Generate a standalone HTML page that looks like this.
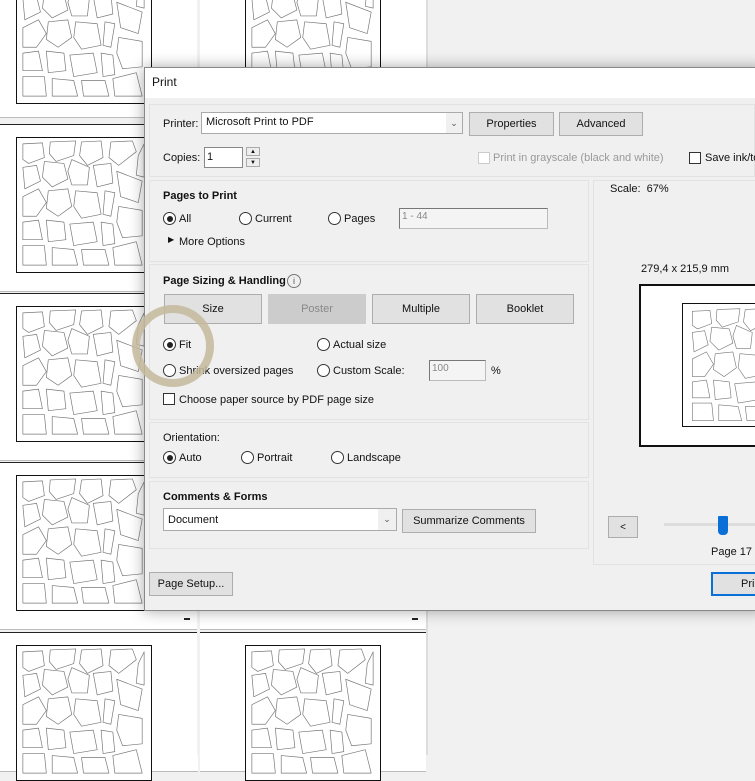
<!DOCTYPE html>
<html><head><meta charset="utf-8">
<style>
*{box-sizing:border-box;margin:0;padding:0}
body{width:755px;height:755px;overflow:hidden;position:relative;background:#f1f1f1;font-family:"Liberation Sans",sans-serif;font-size:11px;color:#111}
.a{position:absolute}
.card{position:absolute;background:#fff;border-top:1px solid #222;border-bottom:1px solid #bbb}
.box{position:absolute;width:136px;height:136px;border:1.5px solid #111;background:#fff}
.box svg{position:absolute;left:0;top:0}
.btn{position:absolute;background:#e1e1e1;border:1px solid #adadad;text-align:center;font-size:11px;line-height:22px}
.rad{position:absolute;width:13px;height:13px;border:1px solid #333;border-radius:50%;background:#fff}
.rad.on::after{content:"";position:absolute;left:2.5px;top:2.5px;width:6px;height:6px;border-radius:50%;background:#222}
.lbl{position:absolute;font-size:11px;white-space:nowrap}
.sec{position:absolute;left:149px;width:440px;border:1px solid #e2e2e2;background:#f0f0f0}
.h{position:absolute;font-weight:bold;font-size:11px}
.inp{position:absolute;background:#f4f4f4;border:1px solid #bbb;border-top-color:#777;border-left-color:#777;color:#888;font-size:10px;padding:2px 2px}
.chk{position:absolute;width:12px;height:12px;border:1px solid #333;background:#fff}
</style></head><body>
<svg width="0" height="0" style="position:absolute">
<defs>
<symbol id="v" viewBox="0 0 136 136">
<g fill="none" stroke="#777" stroke-width="0.7" stroke-linejoin="round">
<polygon points="6,6 26,5 28,20 12,26 6,22"/>
<polygon points="34,4 60,3 58,18 40,24 33,16"/>
<polygon points="66,4 86,3 88,20 72,28 64,18"/>
<polygon points="96,4 118,3 122,14 104,28 94,20"/>
<polygon points="124,18 130,6 130,40 122,38"/>
<polygon points="6,30 20,28 24,44 8,52"/>
<polygon points="28,24 48,26 52,42 36,50 26,40"/>
<polygon points="56,22 74,30 72,48 56,48 52,34"/>
<polygon points="78,28 96,26 98,46 82,50"/>
<polygon points="102,34 128,44 124,66 106,60"/>
<polygon points="6,60 22,52 30,66 20,80 6,80"/>
<polygon points="32,54 52,52 56,70 42,80 30,72"/>
<polygon points="60,54 82,56 86,78 66,82 58,70"/>
<polygon points="90,54 100,56 96,80 88,78"/>
<polygon points="104,70 128,74 128,100 108,102 102,86"/>
<polygon points="6,86 22,84 26,104 6,104"/>
<polygon points="30,84 48,86 50,104 32,106"/>
<polygon points="54,88 78,86 82,106 58,110"/>
<polygon points="86,86 98,88 100,108 88,110"/>
<polygon points="6,110 28,110 30,130 6,130"/>
<polygon points="36,112 58,114 62,130 36,130"/>
<polygon points="66,114 90,114 94,130 68,130"/>
<polygon points="98,112 122,106 128,130 100,130"/>
</g></symbol>
</defs></svg>

<div class="a" style="left:426px;top:0;width:2px;height:755px;background:#ddd"></div>
<div class="card" style="left:0;top:-40px;width:198px;height:158px"></div>
<div class="card" style="left:200px;top:-40px;width:226px;height:158px"></div>
<div class="card" style="left:0;top:124px;width:198px;height:168px"></div>
<div class="card" style="left:200px;top:124px;width:226px;height:168px"></div>
<div class="card" style="left:0;top:293px;width:198px;height:168px"></div>
<div class="card" style="left:200px;top:293px;width:226px;height:168px"></div>
<div class="card" style="left:0;top:462px;width:198px;height:168px"></div>
<div class="card" style="left:200px;top:462px;width:226px;height:168px"></div>
<div class="card" style="left:0;top:632px;width:198px;height:140px"></div>
<div class="card" style="left:200px;top:632px;width:226px;height:140px"></div>
<div class="a" style="left:197px;top:0;width:3px;height:755px;background:#f1f1f1"></div>

<div class="box" style="left:16px;top:-32px"><svg width="133" height="133"><use href="#v"/></svg></div>
<div class="box" style="left:245px;top:-32px"><svg width="133" height="133"><use href="#v"/></svg></div>
<div class="box" style="left:16px;top:137px"><svg width="133" height="133"><use href="#v"/></svg></div>
<div class="box" style="left:245px;top:137px"><svg width="133" height="133"><use href="#v"/></svg></div>
<div class="box" style="left:16px;top:306px"><svg width="133" height="133"><use href="#v"/></svg></div>
<div class="box" style="left:245px;top:306px"><svg width="133" height="133"><use href="#v"/></svg></div>
<div class="box" style="left:16px;top:475px"><svg width="133" height="133"><use href="#v"/></svg></div>
<div class="box" style="left:245px;top:475px"><svg width="133" height="133"><use href="#v"/></svg></div>
<div class="box" style="left:16px;top:645px"><svg width="133" height="133"><use href="#v"/></svg></div>
<div class="box" style="left:245px;top:645px"><svg width="133" height="133"><use href="#v"/></svg></div>
<div class="a" style="left:184px;top:618px;width:6px;height:2px;background:#222"></div>
<div class="a" style="left:412px;top:618px;width:6px;height:2px;background:#222"></div>

<div class="a" style="left:144px;top:67px;width:620px;height:544px;background:#f0f0f0;border:1px solid #888;box-shadow:0 0 14px rgba(0,0,0,.35)"></div>
<div class="a" style="left:145px;top:68px;width:610px;height:30px;background:#fff"></div>
<div class="lbl" style="left:152px;top:75px;font-size:12px">Print</div>

<div class="a" style="left:149px;top:104px;width:606px;height:73px;border:1px solid #e2e2e2"></div>
<div class="lbl" style="left:163px;top:118px">Printer:</div>
<div class="a" style="left:201px;top:112px;width:262px;height:22px;background:#fff;border:1px solid #aaa"></div>
<div class="lbl" style="left:206px;top:116px">Microsoft Print to PDF</div>
<div class="a" style="left:446px;top:113px;width:16px;height:20px;background:#f0f0f0;color:#555;font-size:9px;text-align:center;line-height:20px">&#8964;</div>
<div class="btn" style="left:469px;top:112px;width:85px;height:24px">Properties</div>
<div class="btn" style="left:559px;top:112px;width:84px;height:24px">Advanced</div>

<div class="lbl" style="left:163px;top:152px">Copies:</div>
<div class="a" style="left:204px;top:147px;width:39px;height:21px;background:#fff;border:1px solid #888"></div>
<div class="lbl" style="left:207px;top:151px">1</div>
<div class="a" style="left:246px;top:147px;width:14px;height:9px;border:1px solid #aaa;background:#eee;font-size:6px;text-align:center;line-height:8px">▲</div>
<div class="a" style="left:246px;top:158px;width:14px;height:9px;border:1px solid #aaa;background:#eee;font-size:6px;text-align:center;line-height:8px">▼</div>
<div class="chk" style="left:478px;top:152px;border-color:#ccc"></div>
<div class="lbl" style="left:493px;top:152px;color:#999">Print in grayscale (black and white)</div>
<div class="chk" style="left:689px;top:152px"></div>
<div class="lbl" style="left:705px;top:152px">Save ink/toner</div>

<div class="sec" style="top:180px;height:82px"></div>
<div class="h" style="left:163px;top:190px">Pages to Print</div>
<div class="rad on" style="left:163px;top:212px"></div><div class="lbl" style="left:179px;top:213px">All</div>
<div class="rad" style="left:239px;top:212px"></div><div class="lbl" style="left:255px;top:213px">Current</div>
<div class="rad" style="left:328px;top:212px"></div><div class="lbl" style="left:344px;top:213px">Pages</div>
<div class="inp" style="left:399px;top:208px;width:149px;height:21px">1 - 44</div>
<div class="lbl" style="left:168px;top:235px;font-size:8px">&#9654;</div>
<div class="lbl" style="left:179px;top:236px">More Options</div>

<div class="sec" style="top:264px;height:156px"></div>
<div class="h" style="left:163px;top:275px">Page Sizing &amp; Handling</div>
<div class="a" style="left:287px;top:274px;width:14px;height:14px;border:1px solid #777;border-radius:50%;font-size:9px;text-align:center;line-height:12px;color:#555">i</div>
<div class="btn" style="left:164px;top:294px;width:98px;height:30px;line-height:28px">Size</div>
<div class="btn" style="left:268px;top:294px;width:98px;height:30px;line-height:28px;background:#ccc;border-color:#ccc;color:#888">Poster</div>
<div class="btn" style="left:372px;top:294px;width:98px;height:30px;line-height:28px">Multiple</div>
<div class="btn" style="left:476px;top:294px;width:98px;height:30px;line-height:28px">Booklet</div>
<div class="rad on" style="left:163px;top:338px"></div><div class="lbl" style="left:179px;top:339px">Fit</div>
<div class="rad" style="left:317px;top:338px"></div><div class="lbl" style="left:333px;top:339px">Actual size</div>
<div class="rad" style="left:163px;top:364px"></div><div class="lbl" style="left:179px;top:365px">Shrink oversized pages</div>
<div class="rad" style="left:317px;top:364px"></div><div class="lbl" style="left:333px;top:365px">Custom Scale:</div>
<div class="inp" style="left:429px;top:360px;width:57px;height:21px">100</div>
<div class="lbl" style="left:491px;top:365px">%</div>
<div class="chk" style="left:163px;top:393px"></div><div class="lbl" style="left:179px;top:394px">Choose paper source by PDF page size</div>

<div class="sec" style="top:422px;height:56px"></div>
<div class="lbl" style="left:163px;top:432px">Orientation:</div>
<div class="rad on" style="left:163px;top:451px"></div><div class="lbl" style="left:179px;top:452px">Auto</div>
<div class="rad" style="left:241px;top:451px"></div><div class="lbl" style="left:257px;top:452px">Portrait</div>
<div class="rad" style="left:331px;top:451px"></div><div class="lbl" style="left:347px;top:452px">Landscape</div>

<div class="sec" style="top:481px;height:68px"></div>
<div class="h" style="left:163px;top:491px">Comments &amp; Forms</div>
<div class="a" style="left:163px;top:508px;width:234px;height:23px;background:#fff;border:1px solid #aaa"></div>
<div class="a" style="left:378px;top:509px;width:18px;height:21px;background:#f0f0f0;color:#555;font-size:9px;text-align:center;line-height:20px">&#8964;</div>
<div class="lbl" style="left:168px;top:514px">Document</div>
<div class="btn" style="left:402px;top:509px;width:134px;height:24px">Summarize Comments</div>

<div class="btn" style="left:149px;top:572px;width:84px;height:24px">Page Setup...</div>

<div class="a" style="left:593px;top:180px;width:170px;height:385px;border:1px solid #e2e2e2"></div>
<div class="lbl" style="left:610px;top:183px">Scale:&nbsp; 67%</div>
<div class="lbl" style="left:641px;top:263px">279,4 x 215,9 mm</div>
<div class="a" style="left:639px;top:284px;width:130px;height:163px;background:#fff;border:2px solid #111"></div>
<div class="a" style="left:682px;top:303px;width:80px;height:124px;border:1px solid #111;background:#fff;overflow:hidden"><svg width="120" height="120" style="position:absolute;left:4px;top:2px"><use href="#v"/></svg></div>
<div class="btn" style="left:608px;top:516px;width:30px;height:22px;font-size:10px">&lt;</div>
<div class="a" style="left:664px;top:523px;width:100px;height:3px;background:#ddd"></div>
<div class="a" style="left:718px;top:516px;width:10px;height:19px;background:#0a6fd6;border-radius:1px 1px 4px 4px"></div>
<div class="lbl" style="left:711px;top:546px">Page 17 of 44</div>
<div class="btn" style="left:711px;top:572px;width:60px;height:24px;border:2px solid #0a6fd6;text-align:left;padding-left:28px;line-height:20px">Print</div>

<div class="a" style="left:132px;top:305px;width:82px;height:82px;border-radius:50%;border:8px solid rgba(196,184,155,.85)"></div>
</body></html>
